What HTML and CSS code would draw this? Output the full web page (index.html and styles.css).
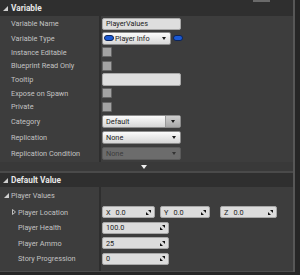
FILE: index.html
```html
<!DOCTYPE html>
<html lang="en">
<head>
    <meta charset="UTF-8">
    <title>Details</title>
    <link rel="stylesheet" href="styles.css">
</head>
<body>
    <div class="window">
        <div class="panel">
            <span class="top-tab"></span>

            <!-- Variable section -->
            <div class="section-head">
                <svg class="caret" width="5" height="5" viewBox="0 0 5 5"><polygon points="5,0 5,5 0,5"/></svg>
                Variable
            </div>
            <div class="row h15">
                <div class="label">Variable Name</div>
                <div class="value"><div class="text-box">PlayerValues</div></div>
            </div>
            <div class="row h14">
                <div class="label">Variable Type</div>
                <div class="value">
                    <div class="combo type-combo">
                        <span class="pill"></span>
                        <span class="combo-text">Player Info</span>
                        <span class="arrow"></span>
                    </div>
                    <span class="pill after"></span>
                </div>
            </div>
            <div class="row h14">
                <div class="label">Instance Editable</div>
                <div class="value"><span class="check"></span></div>
            </div>
            <div class="row h13">
                <div class="label">Blueprint Read Only</div>
                <div class="value"><span class="check"></span></div>
            </div>
            <div class="row h14">
                <div class="label">Tooltip</div>
                <div class="value"><div class="text-box tall"></div></div>
            </div>
            <div class="row h14">
                <div class="label">Expose on Spawn</div>
                <div class="value"><span class="check"></span></div>
            </div>
            <div class="row h13">
                <div class="label">Private</div>
                <div class="value"><span class="check"></span></div>
            </div>
            <div class="row h16">
                <div class="label">Category</div>
                <div class="value">
                    <div class="combo wide">
                        <span class="combo-text">Default</span>
                        <span class="combo-btn"><span class="arrow"></span></span>
                    </div>
                </div>
            </div>
            <div class="row h16">
                <div class="label">Replication</div>
                <div class="value">
                    <div class="combo wide">
                        <span class="combo-text">None</span>
                        <span class="arrow"></span>
                    </div>
                </div>
            </div>
            <div class="row h17">
                <div class="label">Replication Condition</div>
                <div class="value">
                    <div class="combo wide disabled">
                        <span class="combo-text">None</span>
                        <span class="arrow"></span>
                    </div>
                </div>
            </div>
            <div class="advanced">
                <svg width="6" height="4" viewBox="0 0 6 4"><polygon points="0,0 6,0 3,4"/></svg>
            </div>

            <!-- Default Value section -->
            <div class="section-head second">
                <svg class="caret" width="5" height="5" viewBox="0 0 5 5"><polygon points="5,0 5,5 0,5"/></svg>
                Default Value
            </div>
            <div class="row h17">
                <div class="label group">
                    <svg class="caret" width="5" height="5" viewBox="0 0 5 5"><polygon points="5,0 5,5 0,5"/></svg>
                    Player Values
                </div>
                <div class="value"></div>
            </div>
            <div class="row h16">
                <div class="label child">
                    <svg class="expander" width="4" height="6" viewBox="0 0 4 6"><polygon points="0.5,0.5 3.5,3 0.5,5.5"/></svg>
                    Player Location
                </div>
                <div class="value">
                    <div class="vector">
                        <div class="num x"><span class="axis">X</span>0.0<svg class="spin" width="5" height="5" viewBox="0 0 5 5"><polygon points="2,0 5,0 5,3"/><polygon points="0,2 0,5 3,5"/></svg></div>
                        <div class="num y"><span class="axis">Y</span>0.0<svg class="spin" width="5" height="5" viewBox="0 0 5 5"><polygon points="2,0 5,0 5,3"/><polygon points="0,2 0,5 3,5"/></svg></div>
                        <div class="num z"><span class="axis">Z</span>0.0<svg class="spin" width="5" height="5" viewBox="0 0 5 5"><polygon points="2,0 5,0 5,3"/><polygon points="0,2 0,5 3,5"/></svg></div>
                    </div>
                </div>
            </div>
            <div class="row h15">
                <div class="label child">Player Health</div>
                <div class="value"><div class="num single">100.0<svg class="spin" width="5" height="5" viewBox="0 0 5 5"><polygon points="2,0 5,0 5,3"/><polygon points="0,2 0,5 3,5"/></svg></div></div>
            </div>
            <div class="row h16">
                <div class="label child">Player Ammo</div>
                <div class="value"><div class="num single">25<svg class="spin" width="5" height="5" viewBox="0 0 5 5"><polygon points="2,0 5,0 5,3"/><polygon points="0,2 0,5 3,5"/></svg></div></div>
            </div>
            <div class="row h15">
                <div class="label child">Story Progression</div>
                <div class="value"><div class="num single">0<svg class="spin" width="5" height="5" viewBox="0 0 5 5"><polygon points="2,0 5,0 5,3"/><polygon points="0,2 0,5 3,5"/></svg></div></div>
            </div>
            <div class="row filler">
                <div class="label"></div>
                <div class="value"></div>
            </div>
        </div>
        <div class="scroll"></div>
    </div>
</body>
</html>
```

FILE: styles.css
```css
body {
    margin: 0;
    padding: 0;
    width: 300px;
    height: 275px;
    overflow: hidden;
    background-color: #262626;
    font-family: Roboto, "Liberation Sans", sans-serif;
}

.window {
    display: flex;
    height: 275px;
}

.panel {
    position: relative;
    width: 293px;
    height: 271px;
    background-color: #3d3d3d;
    border-bottom: 1px solid #4c4c4c;
    display: flex;
    flex-direction: column;
}

.top-tab {
    position: absolute;
    left: 253px;
    top: 0;
    width: 17px;
    height: 2px;
    background-color: #6a6a6a;
}

.scroll {
    width: 2px;
    height: 272px;
    background-color: #575757;
    margin-right: 5px;
}

.section-head {
    height: 16px;
    background-color: #2f2f2f;
    color: #e6e6e6;
    font-size: 8.3px;
    font-weight: bold;
    display: flex;
    align-items: center;
    padding-left: 3px;
    flex-shrink: 0;
}

.section-head.second {
    height: 14px;
    border-top: 2px solid #4a4a4a;
}

.caret {
    fill: #cfcfcf;
    margin-right: 3px;
}

.row {
    display: flex;
    flex-shrink: 0;
}

.h13 { height: 13px; }
.h14 { height: 14px; }
.h15 { height: 15px; }
.h16 { height: 16px; }
.h17 { height: 17px; }
.filler { flex: 1; }

.label {
    width: 88px;
    padding-left: 11px;
    border-right: 2px solid #2e2e2e;
    color: #c2c2c2;
    font-size: 7.3px;
    display: flex;
    align-items: center;
    white-space: nowrap;
}

.label.group {
    padding-left: 4px;
    width: 95px;
}

.label.group .caret {
    margin-right: 2px;
}

.label.child {
    padding-left: 18px;
    width: 81px;
    position: relative;
}

.expander {
    position: absolute;
    left: 12px;
    top: 5px;
    fill: none;
    stroke: #bdbdbd;
    stroke-width: 1;
}

.value {
    flex: 1;
    padding-left: 1px;
    display: flex;
    align-items: center;
}

.text-box {
    width: 74px;
    height: 10px;
    padding-left: 3px;
    background-color: #dedede;
    border: 1px solid #a8a8a8;
    border-radius: 2px;
    color: #1c1c1c;
    font-size: 7.3px;
    line-height: 10px;
}

.text-box.tall {
    height: 11px;
}

.check {
    width: 8px;
    height: 8px;
    background-color: #a3a3a3;
    border: 1px solid #666;
    border-radius: 1px;
}

.combo {
    position: relative;
    height: 11px;
    display: flex;
    align-items: center;
    background: linear-gradient(#fbfbfb, #d6d6d6);
    border: 1px solid #8c8c8c;
    border-radius: 2px;
    color: #1c1c1c;
    font-size: 7.3px;
}

.type-combo {
    width: 67px;
}

.combo.wide {
    width: 77px;
}

.combo-text {
    padding-left: 3px;
    flex: 1;
}

.type-combo .combo-text {
    padding-left: 1px;
}

.arrow {
    width: 0;
    height: 0;
    border-left: 2.5px solid transparent;
    border-right: 2.5px solid transparent;
    border-top: 3px solid #1a1a1a;
    margin-right: 4px;
}

.combo-btn {
    width: 14px;
    height: 11px;
    background: linear-gradient(#cfcfcf, #a9a9a9);
    border-left: 1px solid #9a9a9a;
    display: flex;
    align-items: center;
    justify-content: center;
}

.combo-btn .arrow {
    margin-right: 0;
}

.combo.disabled {
    background: #6c6c6c;
    border-color: #5a5a5a;
    color: #3c3c3c;
}

.combo.disabled .arrow {
    border-top-color: #333;
}

.pill {
    width: 8px;
    height: 4px;
    background-color: #1b59d4;
    border: 1px solid #0c2459;
    border-radius: 3px;
    margin-left: 1px;
}

.pill.after {
    margin-left: 2px;
}

.vector {
    display: flex;
    gap: 4px;
}

.num {
    height: 10px;
    display: flex;
    align-items: center;
    background-color: #dcdcdc;
    border: 1px solid #a8a8a8;
    border-radius: 2px;
    color: #1c1c1c;
    font-size: 7.3px;
    padding-left: 3px;
    position: relative;
}

.num.x { width: 48px; }
.num.y { width: 45px; margin-left: 1px; }
.num.z { width: 52px; margin-left: 6px; }
.num.single { width: 62px; }

.axis {
    margin-right: 5px;
}

.spin {
    position: absolute;
    right: 3px;
    top: 2.5px;
    fill: #111;
}

.advanced {
    height: 9px;
    background-color: #393939;
    display: flex;
    justify-content: center;
    align-items: center;
    flex-shrink: 0;
}

.advanced svg {
    fill: #f0f0f0;
    margin-right: 5px;
}
```
